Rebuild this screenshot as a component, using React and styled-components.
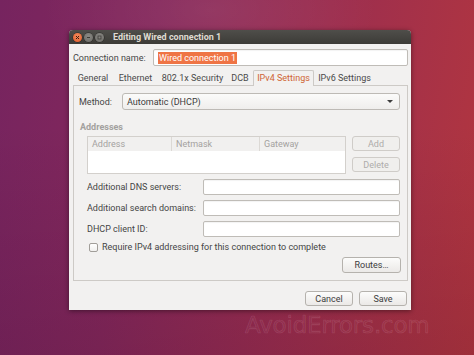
import React from "react";
import styled, { createGlobalStyle } from "styled-components";

const Global = createGlobalStyle`
  html, body { margin: 0; padding: 0; }
  body {
    width: 474px; height: 355px; overflow: hidden;
    font-family: Roboto, "Noto Sans", sans-serif;
    font-size: 9px; color: #3c3c3c;
  }
  * { box-sizing: border-box; }
`;

const Desktop = styled.div`
  width: 474px;
  height: 355px;
  padding: 30px 0 0 69px;
  display: flex;
  flex-direction: column;
  align-items: flex-start;
  overflow: hidden;
  background:
    radial-gradient(ellipse 240px 110px at 210px 10px, rgba(255,255,255,0.07), transparent 70%),
    linear-gradient(to bottom, rgba(0,0,0,0) 35%, rgba(30,0,30,0.14) 100%),
    linear-gradient(100deg, #76245f 0%, #85285b 30%, #9c2e4f 62%, #b3363e 100%);
`;

const Window = styled.div`
  width: 342px;
  display: flex;
  flex-direction: column;
  background: #f2f1f0;
  border-radius: 4px 4px 0 0;
  box-shadow: 0 1px 5px rgba(0, 0, 0, 0.45);
  overflow: hidden;
`;

const TitleBar = styled.div`
  height: 14px;
  display: flex;
  align-items: center;
  padding-left: 4px;
  background: linear-gradient(#4f4e4a, #3c3b37);
`;

const WinButton = styled.span`
  width: 9px;
  height: 9px;
  border-radius: 50%;
  margin-right: 2px;
  display: flex;
  align-items: center;
  justify-content: center;
  background: ${(p) =>
    p.$close
      ? "radial-gradient(circle at 50% 35%, #f48a5c, #df5b2a)"
      : "radial-gradient(circle at 50% 35%, #8a8984, #6b6a66)"};
  box-shadow: 0 0 0 0.5px rgba(0,0,0,0.4);
`;

const Title = styled.span`
  margin-left: 7px;
  font-weight: 700;
  font-size: 9px;
  color: #dfdbd2;
  white-space: nowrap;
`;

const Body = styled.div`
  display: flex;
  flex-direction: column;
  padding: 5px 3px 4px 4px;
`;

const NameRow = styled.div`
  display: flex;
  align-items: center;
  height: 17px;
`;

const Label = styled.span`
  width: ${(p) => p.$w || "auto"};
  flex: none;
  white-space: nowrap;
  color: #454545;
`;

const TextInput = styled.div`
  flex: 1;
  height: ${(p) => p.$h || 17}px;
  background: #ffffff;
  border: 1px solid #bfbcb7;
  border-radius: 2px;
  display: flex;
  align-items: center;
  padding-left: 4px;
  box-shadow: inset 0 1px 1px rgba(0,0,0,0.05);
`;

const Selected = styled.span`
  background: #ef7445;
  color: #ffffff;
  padding: 0 1px;
  line-height: 12px;
`;

const Notebook = styled.div`
  margin-top: 4px;
  display: flex;
  flex-direction: column;
`;

const TabStrip = styled.div`
  display: flex;
  height: 15px;
  position: relative;
  z-index: 1;
`;

const Tab = styled.div`
  width: ${(p) => p.$w}px;
  height: 16px;
  display: flex;
  align-items: center;
  justify-content: center;
  white-space: nowrap;
  color: ${(p) => (p.$active ? "#cf6533" : "#4a4a4a")};
  border: 1px solid ${(p) => (p.$active ? "#cdcac6" : "transparent")};
  border-bottom: none;
  border-radius: 2px 2px 0 0;
  background: ${(p) => (p.$active ? "#f2f1f0" : "transparent")};
  padding-bottom: 1px;
`;

const Panel = styled.div`
  border: 1px solid #cdcac6;
  padding: 7px 7px 7px 5px;
  display: flex;
  flex-direction: column;
`;

const Row = styled.div`
  display: flex;
  align-items: center;
  height: ${(p) => p.$h || 16}px;
  margin-top: ${(p) => p.$mt || 0}px;
  margin-left: ${(p) => p.$ml || 0}px;
`;

const Combo = styled.div`
  flex: 1;
  height: 17px;
  border: 1px solid #bdbab5;
  border-radius: 3px;
  background: linear-gradient(#fbfbfa, #efeeec);
  display: flex;
  align-items: center;
  justify-content: space-between;
  padding: 0 6px 0 4px;
`;

const Arrow = styled.span`
  width: 0;
  height: 0;
  border-left: 3px solid transparent;
  border-right: 3px solid transparent;
  border-top: 3px solid #3c3c3c;
`;

const Heading = styled.div`
  margin-top: 12px;
  height: 10px;
  line-height: 10px;
  font-weight: 700;
  color: #a3a19e;
  margin-left: 1px;
`;

const AddrArea = styled.div`
  margin-top: 4px;
  margin-left: 8px;
  display: flex;
  gap: 6px;
`;

const Table = styled.div`
  width: 260px;
  height: 38px;
  border: 1px solid #d3d0cc;
  background: #ffffff;
  display: flex;
  flex-direction: column;
`;

const HeaderRow = styled.div`
  height: 14px;
  display: grid;
  grid-template-columns: 83px 88px 1fr;
  background: #f1f0ef;
`;

const HeaderCell = styled.div`
  display: flex;
  align-items: center;
  padding-left: 4px;
  color: #a4a2a0;
  border-left: ${(p) => (p.$first ? "none" : "1px solid #dcd9d5")};
`;

const SideButtons = styled.div`
  width: 48px;
  display: flex;
  flex-direction: column;
  gap: 6px;
`;

const Button = styled.div`
  width: ${(p) => p.$w || 48}px;
  height: ${(p) => p.$h || 15}px;
  display: flex;
  align-items: center;
  justify-content: center;
  border: 1px solid ${(p) => (p.$disabled ? "#cfccc8" : "#b5b2ad")};
  border-radius: 3px;
  background: ${(p) =>
    p.$disabled ? "#f0efed" : "linear-gradient(#fcfcfb, #ebe9e7)"};
  color: ${(p) => (p.$disabled ? "#aeacaa" : "#3c3c3c")};
  white-space: nowrap;
`;

const FormRows = styled.div`
  margin-top: 5px;
  margin-left: 8px;
  display: flex;
  flex-direction: column;
  gap: 5px;
`;

const Checkbox = styled.span`
  width: 9px;
  height: 9px;
  border: 1px solid #a19e99;
  border-radius: 2px;
  background: linear-gradient(#ffffff, #f1f0ee);
  margin-right: 4px;
  flex: none;
`;

const RoutesRow = styled.div`
  margin-top: 5px;
  display: flex;
  justify-content: flex-end;
  margin-right: -1px;
`;

const Footer = styled.div`
  margin-top: 10px;
  display: flex;
  justify-content: flex-end;
  gap: 6px;
  padding-right: 1px;
`;

const Watermark = styled.div`
  margin-top: 3px;
  margin-left: 176px;
  font-family: "DejaVu Sans", sans-serif;
  font-size: 23px;
  line-height: 24px;
  letter-spacing: -0.2px;
  color: rgba(255, 255, 255, 0.03);
  -webkit-text-stroke: 0.7px rgba(255, 215, 230, 0.16);
  white-space: nowrap;
`;

const Glyph = ({ type }) => (
  <svg width="5" height="5" viewBox="0 0 5 5">
    {type === "close" && (
      <path d="M1 1L4 4M4 1L1 4" stroke="#3b1a10" strokeWidth="1" />
    )}
    {type === "min" && <path d="M1 2.5H4" stroke="#3c3b37" strokeWidth="1" />}
    {type === "max" && (
      <rect x="1" y="1" width="3" height="3" fill="none" stroke="#3c3b37" strokeWidth="0.8" />
    )}
  </svg>
);

const tabs = [
  ["General", 40],
  ["Ethernet", 45],
  ["802.1x Security", 69],
  ["DCB", 26],
  ["IPv4 Settings", 61, true],
  ["IPv6 Settings", 61],
];

export default function App() {
  return (
    <>
      <Global />
      <Desktop>
        <Window>
          <TitleBar>
            <WinButton $close><Glyph type="close" /></WinButton>
            <WinButton><Glyph type="min" /></WinButton>
            <WinButton><Glyph type="max" /></WinButton>
            <Title>Editing Wired connection 1</Title>
          </TitleBar>
          <Body>
            <NameRow>
              <Label $w="80px">Connection name:</Label>
              <TextInput>
                <Selected>Wired connection 1</Selected>
              </TextInput>
            </NameRow>
            <Notebook>
              <TabStrip>
                {tabs.map(([t, w, a]) => (
                  <Tab key={t} $w={w} $active={a}>{t}</Tab>
                ))}
              </TabStrip>
              <Panel>
                <Row $h={17}>
                  <Label $w="43px">Method:</Label>
                  <Combo>
                    <span>Automatic (DHCP)</span>
                    <Arrow />
                  </Combo>
                </Row>
                <Heading>Addresses</Heading>
                <AddrArea>
                  <Table>
                    <HeaderRow>
                      <HeaderCell $first>Address</HeaderCell>
                      <HeaderCell>Netmask</HeaderCell>
                      <HeaderCell>Gateway</HeaderCell>
                    </HeaderRow>
                  </Table>
                  <SideButtons>
                    <Button $disabled>Add</Button>
                    <Button $disabled>Delete</Button>
                  </SideButtons>
                </AddrArea>
                <FormRows>
                  <Row>
                    <Label $w="116px">Additional DNS servers:</Label>
                    <TextInput $h={16} />
                  </Row>
                  <Row>
                    <Label $w="116px">Additional search domains:</Label>
                    <TextInput $h={16} />
                  </Row>
                  <Row>
                    <Label $w="116px">DHCP client ID:</Label>
                    <TextInput $h={16} />
                  </Row>
                </FormRows>
                <Row $h={10} $mt={5} $ml={10}>
                  <Checkbox />
                  <Label>Require IPv4 addressing for this connection to complete</Label>
                </Row>
                <RoutesRow>
                  <Button $w={59} $h={16}>Routes…</Button>
                </RoutesRow>
              </Panel>
            </Notebook>
            <Footer>
              <Button>Cancel</Button>
              <Button>Save</Button>
            </Footer>
          </Body>
        </Window>
        <Watermark>AvoidErrors.com</Watermark>
      </Desktop>
    </>
  );
}
